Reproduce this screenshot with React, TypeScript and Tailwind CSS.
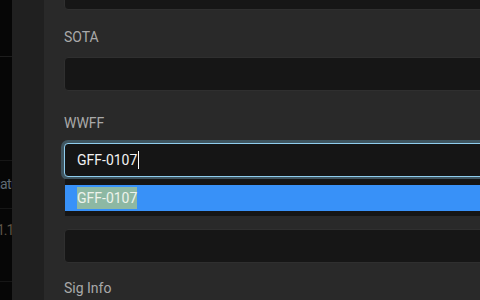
const font = { fontFamily: "Roboto, 'Noto Sans', sans-serif" };

function Label({ text, className }: { text: string; className: string }) {
  return <div className={`text-[14px] leading-[20px] text-[#a9a9a9] ${className}`}>{text}</div>;
}

function Field({ className, value }: { className: string; value?: string }) {
  return (
    <div
      className={`h-[34px] w-[440px] rounded-[4px] border border-[#2f2f2f] bg-[#161616] px-[12px] text-[14px] leading-[32px] text-[#ececec] ${className}`}
    >
      {value}
    </div>
  );
}

export default function App() {
  return (
    <div className="flex h-[300px] w-[480px] overflow-hidden bg-[#292929]" style={font}>
      {/* sidebar peeking from the left */}
      <div className="flex w-[12px] shrink-0 flex-col overflow-hidden bg-[#060606]">
        <div className="h-[57px] border-b border-[#1d1d1d]" />
        <div className="h-[104px] border-b border-[#161616]" />
        <div className="flex h-[48px] items-center whitespace-nowrap border-b border-[#161616]">
          <span className="-ml-[12px] text-[14px] tracking-[-0.5px] text-[#5f6a74]">Status</span>
        </div>
        <div className="flex h-[73px] items-start whitespace-nowrap border-b border-[#161616] pt-[12px]">
          <span className="-ml-[3px] text-[14px] leading-[18px] tracking-[-1px] text-[#5e5546]">1.1</span>
        </div>
        <div className="flex-1" />
      </div>
      <div className="w-[32px] shrink-0 bg-[#202020]" />

      <div className="relative flex-1 pl-[20px]">
        <Field className="-mt-[24px]" />

        <Label text="SOTA" className="mt-[17px]" />
        <Field className="mt-[10px]" />

        <Label text="WWFF" className="mt-[22px]" />
        <div className="relative mt-[10px]">
          <div className="h-[34px] w-[440px] rounded-[4px] border border-[#8fcdee] bg-[#151515] px-[12px] text-[14px] leading-[32px] text-[#f2f2f2] shadow-[0_0_0_3px_rgba(90,140,165,0.45)]">
            GFF-0107<span className="ml-[1px] inline-block h-[18px] w-[1px] bg-white align-[-4px]" />
          </div>
          <div className="absolute left-[1px] top-[36px] z-10 w-[440px] bg-[#151515] pb-[5px] pt-[6px]">
            <div className="h-[26px] bg-[#3891f8] pl-[12px] text-[14px] leading-[26px]">
              <span className="inline-block bg-[#8db8a3] py-[1px] leading-[20px] text-[#eef3ec]">GFF-0107</span>
            </div>
          </div>
        </div>

        {/* label hidden behind the open dropdown */}
        <div className="mt-[22px] h-[20px]" />
        <Field className="mt-[10px]" />

        <Label text="Sig Info" className="mt-[15px]" />
      </div>
    </div>
  );
}
